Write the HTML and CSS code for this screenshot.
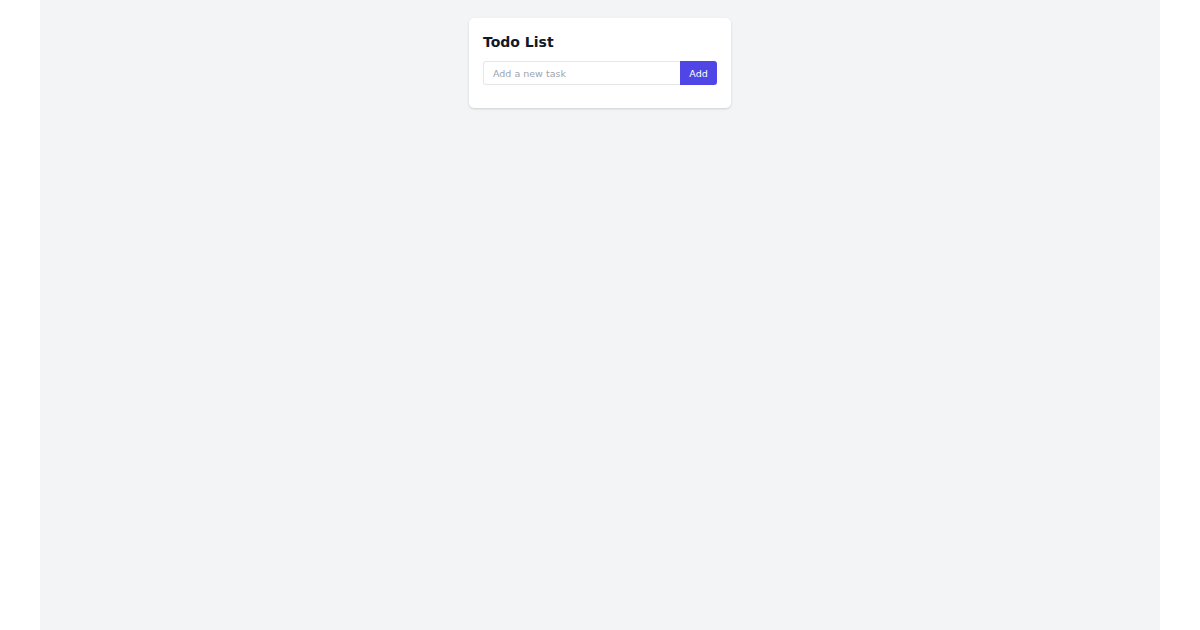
FILE: index.html
```html
<!DOCTYPE html>
<html>
<head>
<meta charset="utf-8">
<link rel="stylesheet" href="styles.css">
</head>
<body>
<div class="page">
  <div class="card">
    <h1 class="title">Todo List</h1>
    <form class="add-row">
      <input class="task-input" type="text" placeholder="Add a new task">
      <button class="add-btn" type="button">Add</button>
    </form>
  </div>
</div>
</body>
</html>
```
FILE: styles.css
```css
html, body {
  margin: 0;
  padding: 0;
  height: 100%;
  background: #ffffff;
  font-family: "DejaVu Sans", sans-serif;
}
.page {
  width: 1120px;
  margin: 0 auto;
  height: 630px;
  background: #f3f4f6;
  display: flex;
  flex-direction: column;
  align-items: center;
  padding-top: 18px;
  box-sizing: border-box;
}
.card {
  width: 262px;
  height: 90px;
  box-sizing: border-box;
  background: #ffffff;
  border-radius: 5px;
  box-shadow: 0 1px 3px rgba(0,0,0,0.1), 0 1px 2px rgba(0,0,0,0.06);
  padding: 15px 14px 14px;
}
.title {
  margin: 0;
  font-size: 14px;
  font-weight: bold;
  color: #111827;
  line-height: 18px;
}
.add-row {
  display: flex;
  margin-top: 10px;
  height: 24px;
}
.task-input {
  flex: 1;
  min-width: 0;
  box-sizing: border-box;
  height: 24px;
  border: 1px solid #e5e7eb;
  border-right: none;
  border-radius: 3px 0 0 3px;
  padding: 0 9px;
  font-family: "DejaVu Sans", sans-serif;
  font-size: 9.5px;
  color: #111827;
  outline: none;
}
.task-input::placeholder {
  color: #9ca3af;
}
.add-btn {
  width: 37px;
  height: 24px;
  border: none;
  background: #4f46e5;
  color: #ffffff;
  border-radius: 0 3px 3px 0;
  font-family: "DejaVu Sans", sans-serif;
  font-size: 9.5px;
  padding: 0;
}
```
